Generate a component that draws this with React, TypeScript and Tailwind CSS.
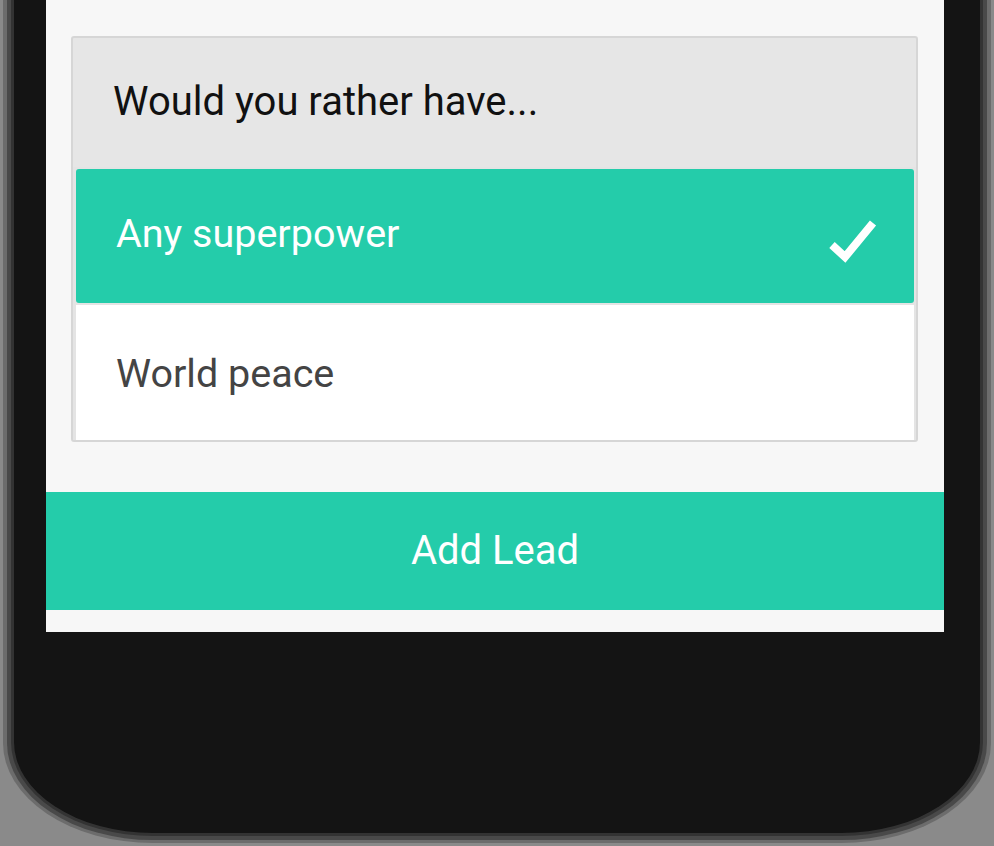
export default function App() {
  return (
    <div className="w-[994px] h-[846px] overflow-hidden bg-[#8a8a8a] font-['Roboto',sans-serif]">
      {/* Phone body, layered edge bands */}
      <div className="ml-[3px] w-[988px] h-[843px] bg-[#6c6c6c] px-[4px] pb-[3px] rounded-b-[150px_100px]">
        <div className="h-full bg-[#494949] px-[4px] pb-[4px] rounded-b-[146px_97px]">
          <div className="h-full bg-[#333333] px-[3px] pb-[3px] rounded-b-[142px_94px]">
            <div className="h-full bg-[#141414] pl-[32px] pr-[36px] rounded-b-[139px_91px]">
              {/* Screen */}
              <div className="h-[632px] bg-[#f7f7f7] pt-[36px]">
                <div className="ml-[25px] mr-[26px] border-2 border-[#d6d6d6] rounded-[3px] bg-[#e6e6e6]">
                  <div className="h-[129px] flex items-center pl-[40px] text-[40px] leading-none text-[#111111] pb-[2px]">
                    Would you rather have...
                  </div>
                  <div className="pl-[3px] pr-[2px] pt-[2px] bg-[#e4e4e4] flex flex-col gap-[2px]">
                    <div className="h-[134px] bg-[#24ccaa] rounded-[3px] flex items-center justify-between pl-[40px] pr-[36px] text-white text-[39.5px] leading-none">
                      <span className="pb-[4px]">Any superpower</span>
                      <svg className="mt-[8px]" width="50" height="48" viewBox="0 0 50 48" fill="none">
                        <path d="M4 29 L17 41 L45 7" stroke="white" strokeWidth="8" strokeLinejoin="miter" />
                      </svg>
                    </div>
                    <div className="h-[135px] bg-white flex items-center pl-[40px] text-[39.5px] leading-none text-[#444444]">
                      <span className="pt-[2px]">World peace</span>
                    </div>
                  </div>
                </div>
                <button className="mt-[50px] w-full h-[118px] bg-[#24ccaa] text-white text-[40px] leading-none flex items-center justify-center">
                  Add Lead
                </button>
              </div>
            </div>
          </div>
        </div>
      </div>
    </div>
  );
}
